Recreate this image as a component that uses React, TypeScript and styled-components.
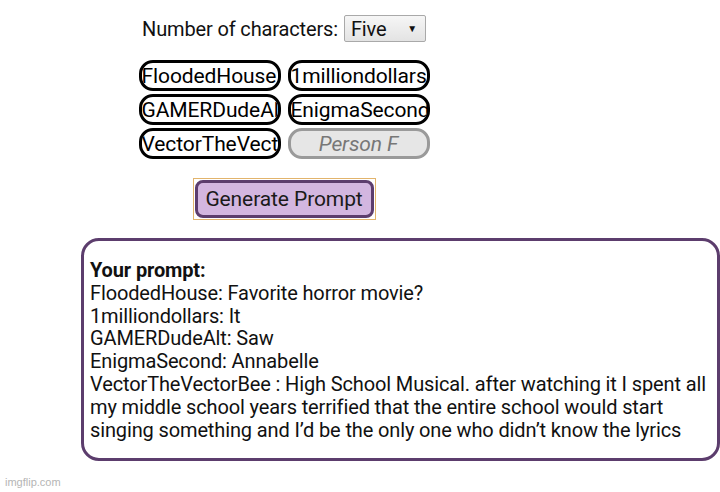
import React, { useState } from "react";
import styled, { createGlobalStyle } from "styled-components";

const GlobalStyle = createGlobalStyle`
  html, body {
    margin: 0;
    padding: 0;
    background: #ffffff;
    font-family: Roboto, "Noto Sans", sans-serif;
  }
  #root {
    width: 720px;
    height: 492px;
    position: relative;
    overflow: hidden;
  }
`;

const Page = styled.div`
  display: flex;
  flex-direction: column;
  width: 720px;
  height: 492px;
`;

const Controls = styled.div`
  width: 568px;
  display: flex;
  flex-direction: column;
  align-items: center;
  padding-top: 15px;
`;

const CountRow = styled.div`
  display: flex;
  align-items: center;
  gap: 6px;
  font-size: 20px;
  letter-spacing: -0.15px;
  color: #111;
`;

const Select = styled.div`
  position: relative;
  box-sizing: border-box;
  width: 82px;
  height: 27px;
  border: 1px solid #a9a9a9;
  border-radius: 2px;
  background: linear-gradient(#f6f6f6, #e3e3e3);
  display: flex;
  align-items: center;
  padding-left: 6px;
  font-size: 20px;
  color: #111;
`;

const Arrow = styled.span`
  position: absolute;
  right: 8px;
  top: 7px;
  font-size: 10px;
`;

const NameGrid = styled.div`
  display: grid;
  grid-template-columns: 142px 142px;
  column-gap: 7px;
  row-gap: 3px;
  margin-top: 18px;
`;

const NameInput = styled.input<{ $empty?: boolean }>`
  box-sizing: border-box;
  width: 142px;
  height: 31px;
  border: 3px solid ${(p) => (p.$empty ? "#9a9a9a" : "#000")};
  border-radius: 14px;
  background: ${(p) => (p.$empty ? "#e6e6e6" : "#fff")};
  padding: 0;
  font-family: Roboto, sans-serif;
  font-size: 21px;
  letter-spacing: -0.1px;
  color: #000;
  text-align: ${(p) => (p.$empty ? "center" : "left")};
  outline: none;

  &::placeholder {
    color: #777;
    font-style: italic;
  }
`;

const ButtonFrame = styled.div`
  margin-top: 19px;
  border: 1px solid #e2b46c;
  display: flex;
  padding: 1px;
`;

const GenerateButton = styled.button`
  box-sizing: border-box;
  width: 179px;
  height: 38px;
  border: 3px solid #5c3d6d;
  border-radius: 8px;
  background: #d3b6e0;
  font-family: Roboto, sans-serif;
  font-size: 21px;
  letter-spacing: -0.1px;
  color: #1a1a1a;
  padding: 0;
`;

const Output = styled.div`
  box-sizing: border-box;
  margin-top: 18px;
  margin-left: 81px;
  width: 639px;
  height: 223px;
  border: 3px solid #5c3d6d;
  border-radius: 18px;
  padding: 18px 6px 16px;
  font-size: 20px;
  letter-spacing: -0.13px;
  line-height: 22.8px;
  color: #111;
`;

const PromptTitle = styled.div`
  font-weight: bold;
`;

const Watermark = styled.div`
  position: absolute;
  left: 5px;
  bottom: 4px;
  font-family: "Liberation Sans", Arial, sans-serif;
  font-size: 11px;
  color: #b5b5b5;
`;

const names = [
  "FloodedHouse",
  "1milliondollars",
  "GAMERDudeAlt",
  "EnigmaSecond",
  "VectorTheVectorBee",
  "",
];

const lines = [
  "FloodedHouse: Favorite horror movie?",
  "1milliondollars: It",
  "GAMERDudeAlt: Saw",
  "EnigmaSecond: Annabelle",
  "VectorTheVectorBee : High School Musical. after watching it I spent all my middle school years terrified that the entire school would start singing something and I\u2019d be the only one who didn\u2019t know the lyrics",
];

const App = () => {
  const [values, setValues] = useState(names);

  return (
    <>
      <GlobalStyle />
      <Page>
        <Controls>
          <CountRow>
            <span>Number of characters:</span>
            <Select>
              Five
              <Arrow>▼</Arrow>
            </Select>
          </CountRow>
          <NameGrid>
            {values.map((v, i) => (
              <NameInput
                key={i}
                value={v}
                $empty={!v}
                placeholder={`Person ${String.fromCharCode(65 + i)}`}
                onChange={(e) => {
                  const next = [...values];
                  next[i] = e.target.value;
                  setValues(next);
                }}
              />
            ))}
          </NameGrid>
          <ButtonFrame>
            <GenerateButton>Generate Prompt</GenerateButton>
          </ButtonFrame>
        </Controls>
        <Output>
          <PromptTitle>Your prompt:</PromptTitle>
          {lines.map((l) => (
            <div key={l}>{l}</div>
          ))}
        </Output>
      </Page>
      <Watermark>imgflip.com</Watermark>
    </>
  );
};

export default App;
